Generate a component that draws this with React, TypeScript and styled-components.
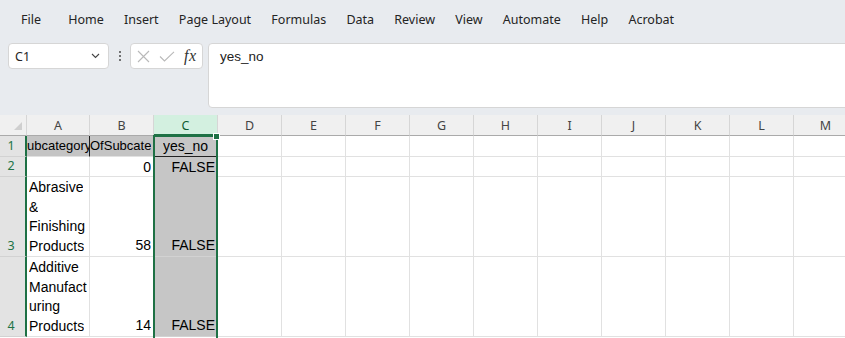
import React from "react";
import styled, { createGlobalStyle } from "styled-components";

const Global = createGlobalStyle`
  html, body { margin: 0; padding: 0; }
  body {
    background: #e8ebef;
    overflow: hidden;
    width: 845px;
    height: 338px;
    font-family: "Noto Sans", "Open Sans", sans-serif;
  }
`;

const Page = styled.div`
  display: flex;
  flex-direction: column;
  width: 845px;
  height: 338px;
  overflow: hidden;
`;

const MenuBar = styled.nav`
  display: flex;
  align-items: center;
  height: 40px;
  padding-left: 11px;
`;

const MenuItem = styled.span<{ $wide?: boolean }>`
  font-size: 12.5px;
  color: #242424;
  padding: 0 ${(p) => (p.$wide ? "17px" : "10.1px")} 0 10.1px;
  white-space: nowrap;
  line-height: 20px;
`;

const FormulaRow = styled.div`
  display: flex;
  align-items: flex-start;
  margin-top: 3px;
  padding-left: 8px;
  height: 65px;
  & > * { flex-shrink: 0; }
`;

const NameBox = styled.div`
  display: flex;
  align-items: center;
  justify-content: space-between;
  box-sizing: border-box;
  width: 101px;
  height: 26px;
  background: #fff;
  border: 1px solid #d6d6d6;
  border-radius: 4px;
  padding: 0 8px 0 6px;
  font-size: 12.5px;
  color: #242424;
`;

const Dots = styled.div`
  display: flex;
  flex-direction: column;
  justify-content: center;
  gap: 2px;
  width: 21px;
  height: 26px;
  align-items: center;
  & > i {
    display: block;
    width: 2px;
    height: 2px;
    background: #4a4a4a;
    border-radius: 1px;
  }
`;

const FxBox = styled.div`
  display: flex;
  align-items: center;
  box-sizing: border-box;
  width: 73px;
  height: 26px;
  background: #fff;
  border: 1px solid #d6d6d6;
  border-radius: 4px;
  padding: 0 0 0 6px;
  gap: 9px;
`;

const Fx = styled.span`
  font-family: "Liberation Serif", "DejaVu Serif", serif;
  font-style: italic;
  font-size: 16px;
  color: #333;
  letter-spacing: 0.5px;
`;

const FormulaInput = styled.div`
  box-sizing: border-box;
  margin-left: 5px;
  width: 660px;
  height: 65px;
  background: #fff;
  border: 1px solid #d6d6d6;
  border-radius: 4px;
  padding: 5px 11px;
  font-family: "Liberation Sans", Arial, sans-serif;
  font-size: 13.5px;
  color: #222;
`;

const SheetWrap = styled.div`
  position: relative;
  margin-top: 7px;
  flex: 1;
  background: #fff;
  overflow: hidden;
`;

const Grid = styled.div`
  display: grid;
  grid-template-columns: 27px 63px repeat(12, 64px);
  grid-template-rows: 21px 21px 20px 80px 80px;
`;

const Corner = styled.div`
  position: relative;
  box-sizing: border-box;
  background: #f0f0f0;
  border-right: 1px solid #d6d6d6;
  border-bottom: 1px solid #aaaaaa;
  &::after {
    content: "";
    position: absolute;
    right: 4px;
    bottom: 5px;
    width: 0;
    height: 0;
    border-left: 8px solid transparent;
    border-bottom: 8px solid #cfcfcf;
  }
`;

const ColHead = styled.div<{ $sel?: boolean }>`
  box-sizing: border-box;
  display: flex;
  align-items: center;
  justify-content: center;
  background: ${(p) => (p.$sel ? "#d3f0e0" : "#f0f0f0")};
  border-right: 1px solid #d6d6d6;
  border-bottom: ${(p) => (p.$sel ? "2px solid #1e7145" : "1px solid #aaaaaa")};
  color: ${(p) => (p.$sel ? "#0f5c31" : "#444")};
  font-size: 12.5px;
  padding-top: ${(p) => (p.$sel ? "1px" : "0")};
`;

const RowHead = styled.div`
  box-sizing: border-box;
  display: flex;
  align-items: flex-end;
  justify-content: center;
  background: #e3e3e3;
  border-right: 2px solid #1e7145;
  border-bottom: 1px solid #d2d2d2;
  color: #217346;
  font-size: 12.5px;
  padding-bottom: 1px;
  padding-right: 3px;
  line-height: 18px;
`;

const Cell = styled.div<{
  $align?: "left" | "right" | "center";
  $fill?: string;
  $rightLine?: string;
  $bottomLine?: string;
  $clip?: boolean;
}>`
  box-sizing: border-box;
  display: flex;
  flex-direction: column;
  justify-content: flex-end;
  align-items: ${(p) =>
    p.$align === "right" ? "flex-end" : p.$align === "center" ? "center" : "flex-start"};
  overflow: hidden;
  white-space: nowrap;
  background: ${(p) => p.$fill || "#fff"};
  border-right: 1px solid ${(p) => p.$rightLine || "#e1e1e1"};
  border-bottom: 1px solid ${(p) => p.$bottomLine || "#e1e1e1"};
  padding: ${(p) => (p.$clip ? "0 0 1px 0" : "0 2px 1px 2px")};
  font-family: "Liberation Sans", Arial, sans-serif;
  font-size: ${(p) => (p.$clip ? "13px" : "14px")};
  line-height: 20px;
  color: #000;
`;

const Line = styled.span`
  display: block;
  max-width: 100%;
  overflow: hidden;
`;

const Selection = styled.div`
  position: absolute;
  left: 153px;
  top: 20px;
  width: 65px;
  bottom: -4px;
  box-sizing: border-box;
  border: 2px solid #1e7145;
  pointer-events: none;
  &::after {
    content: "";
    position: absolute;
    right: -4px;
    top: -4px;
    width: 5px;
    height: 5px;
    background: #1e7145;
    border: 1px solid #fff;
  }
`;

const menu = [
  "File",
  "Home",
  "Insert",
  "Page Layout",
  "Formulas",
  "Data",
  "Review",
  "View",
  "Automate",
  "Help",
  "Acrobat",
];

const cols = ["A", "B", "C", "D", "E", "F", "G", "H", "I", "J", "K", "L", "M"];

type CellData = {
  lines?: string[];
  align?: "left" | "right" | "center";
  fill?: string;
  rightLine?: string;
  bottomLine?: string;
  clip?: boolean;
};

const GRAY = "#c4c4c4";
const SELGRAY = "#c6c6c6";

const rows: CellData[][] = [
  [
    { lines: ["ubcategory"], fill: GRAY, rightLine: "#222", clip: true },
    { lines: ["OfSubcate"], fill: GRAY, rightLine: GRAY, clip: true },
    { lines: ["yes_no"], align: "center", fill: SELGRAY, bottomLine: "#222", rightLine: SELGRAY },
  ],
  [
    {},
    { lines: ["0"], align: "right" },
    { lines: ["FALSE"], align: "right", fill: SELGRAY, bottomLine: SELGRAY, rightLine: SELGRAY },
  ],
  [
    { lines: ["Abrasive", "&", "Finishing", "Products"] },
    { lines: ["58"], align: "right" },
    { lines: ["FALSE"], align: "right", fill: SELGRAY, bottomLine: "#d2d2d2", rightLine: SELGRAY },
  ],
  [
    { lines: ["Additive", "Manufact", "uring", "Products"] },
    { lines: ["14"], align: "right" },
    { lines: ["FALSE"], align: "right", fill: SELGRAY, bottomLine: "#d2d2d2", rightLine: SELGRAY },
  ],
];

export default function App() {
  return (
    <Page>
      <Global />
      <MenuBar>
        {menu.map((m, i) => (
          <MenuItem key={m} $wide={i === 0}>
            {m}
          </MenuItem>
        ))}
      </MenuBar>
      <FormulaRow>
        <NameBox>
          <span>C1</span>
          <svg width="9" height="6" viewBox="0 0 9 6">
            <path d="M1 1 L4.5 4.5 L8 1" fill="none" stroke="#444" strokeWidth="1.1" />
          </svg>
        </NameBox>
        <Dots>
          <i />
          <i />
          <i />
        </Dots>
        <FxBox>
          <svg width="13" height="13" viewBox="0 0 13 13">
            <path d="M1 1 L12 12 M12 1 L1 12" stroke="#b9b9b9" strokeWidth="1.1" fill="none" />
          </svg>
          <svg width="16" height="11" viewBox="0 0 16 11">
            <path d="M1 5.5 L5.5 10 L15 0.8" stroke="#b9b9b9" strokeWidth="1.1" fill="none" />
          </svg>
          <Fx>fx</Fx>
        </FxBox>
        <FormulaInput>yes_no</FormulaInput>
      </FormulaRow>
      <SheetWrap>
        <Grid>
          <Corner />
          {cols.map((c) => (
            <ColHead key={c} $sel={c === "C"}>
              {c}
            </ColHead>
          ))}
          {rows.map((r, ri) => (
            <React.Fragment key={ri}>
              <RowHead>{ri + 1}</RowHead>
              {cols.map((c, ci) => {
                const d = r[ci] || {};
                return (
                  <Cell
                    key={c}
                    $align={d.align}
                    $fill={d.fill}
                    $rightLine={d.rightLine}
                    $bottomLine={d.bottomLine}
                    $clip={d.clip}
                  >
                    {(d.lines || []).map((l, li) => (
                      <Line key={li}>{l}</Line>
                    ))}
                  </Cell>
                );
              })}
            </React.Fragment>
          ))}
        </Grid>
        <Selection />
      </SheetWrap>
    </Page>
  );
}
